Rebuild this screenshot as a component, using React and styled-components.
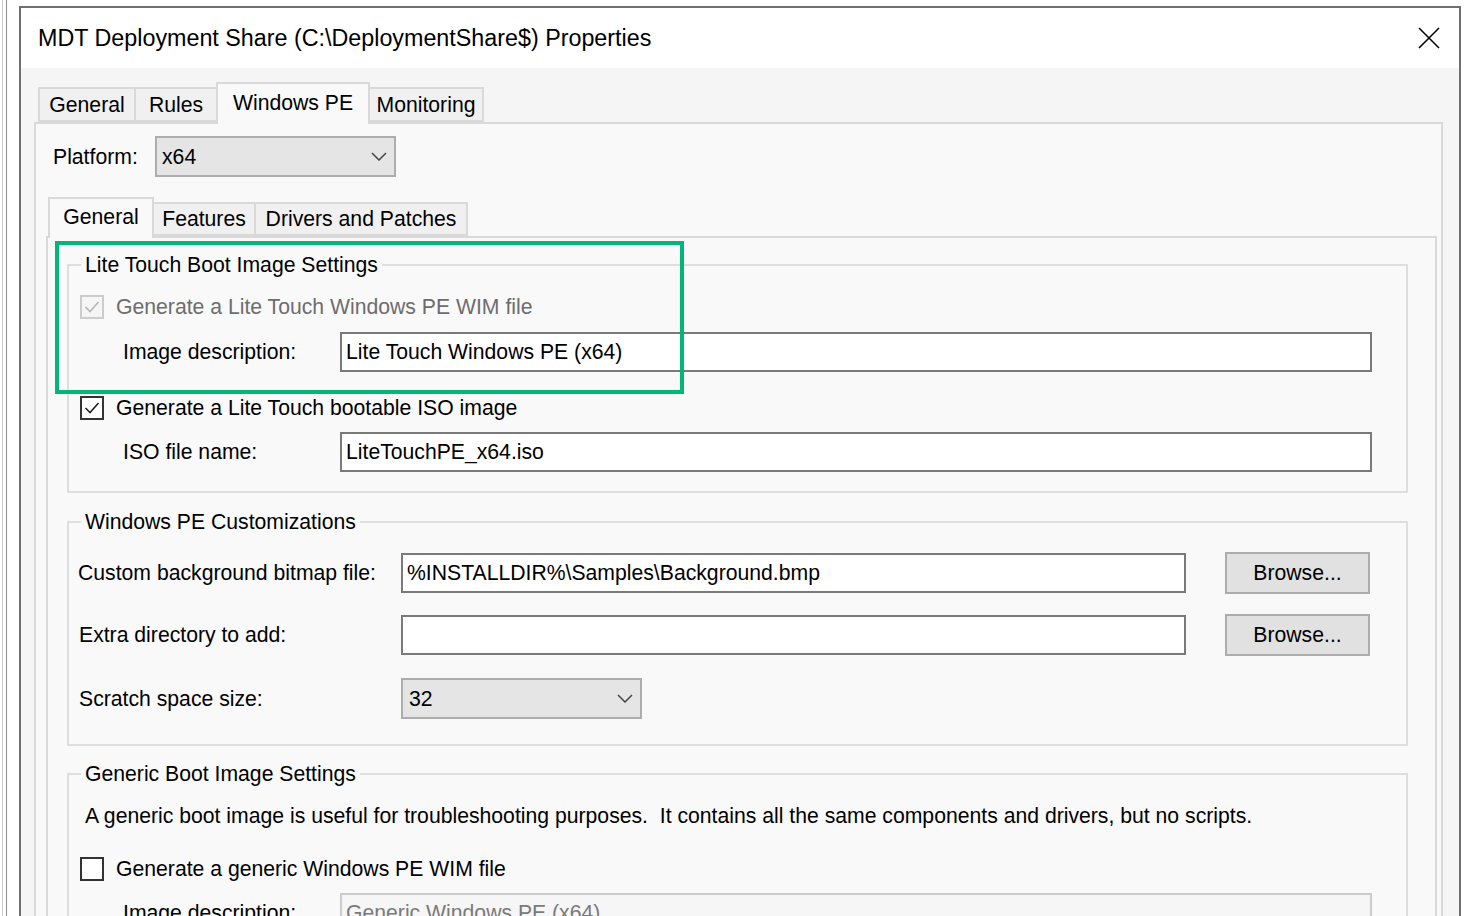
import React from 'react';
import styled, { createGlobalStyle } from 'styled-components';

const GlobalStyle = createGlobalStyle`
  html, body {
    margin: 0;
    padding: 0;
    background: #fff;
    overflow: hidden;
  }

  * {
    box-sizing: border-box;
  }
`;

const FONT = `"Liberation Sans", Arial, sans-serif`;
const TEXT_SIZE = '21.2px';

const Desktop = styled.div`
  display: flex;
  height: 916px;
  overflow: hidden;
  font-family: ${FONT};
  color: #000;
`;

const BackEdge = styled.div`
  flex: none;
  width: 19px;
  padding-left: 2px;
`;

const BackEdgeLine = styled.div`
  height: 100%;
  border-left: 1px solid #cacaca;
  padding-left: 3px;

  > div {
    height: 100%;
    border-left: 1px solid #8d8d8d;
  }
`;

const Dialog = styled.div`
  flex: none;
  width: 1442px;
  height: 1000px;
  margin-top: 6px;
  border: 2px solid #6f6f6f;
  border-bottom: none;
  display: flex;
  flex-direction: column;
`;

const TitleBar = styled.div`
  height: 60px;
  display: flex;
  align-items: center;
  justify-content: space-between;
  padding-left: 17px;
  background: #fff;
  font-size: 23.3px;
`;

const CloseBtn = styled.div`
  width: 60px;
  height: 60px;
  display: flex;
  align-items: center;
  justify-content: center;
`;

const Body = styled.div`
  flex: 1;
  background: #f5f5f5;
  padding: 14px 16px 0 13px;
  display: flex;
  flex-direction: column;
`;

const TabStrip = styled.div`
  display: flex;
  align-items: flex-end;
  margin-left: ${(p) => p.$ml}px;
  margin-top: ${(p) => p.$mt || 0}px;
`;

const Tab = styled.div`
  width: ${(p) => p.$w}px;
  height: ${(p) => (p.$active ? p.$h + 2 : p.$h - 5)}px;
  display: flex;
  align-items: center;
  justify-content: center;
  padding-bottom: ${(p) => (p.$active ? 3 : 0)}px;
  border: 2px solid #d9d9d9;
  border-bottom: ${(p) => (p.$active ? 'none' : '2px solid #d9d9d9')};
  margin-bottom: ${(p) => (p.$active ? -2 : 0)}px;
  background: ${(p) => (p.$active ? '#f9f9f9' : '#f0f0f0')};
  font-size: ${TEXT_SIZE};
  white-space: nowrap;
  position: relative;
  z-index: ${(p) => (p.$active ? 1 : 0)};

  & + & {
    margin-left: -2px;
  }
`;

const Panel = styled.div`
  flex: 1;
  border: 2px solid #d9d9d9;
  border-bottom: none;
  background: #f9f9f9;
  padding: ${(p) => p.$pad};
  display: flex;
  flex-direction: column;
  position: relative;
`;

const Row = styled.div`
  display: flex;
  align-items: center;
  height: ${(p) => p.$h || 40}px;
  margin-top: ${(p) => p.$mt || 0}px;
  padding-left: ${(p) => p.$pl || 0}px;
  flex: none;
`;

const Label = styled.div`
  width: ${(p) => (p.$w ? `${p.$w}px` : 'auto')};
  flex: none;
  font-size: ${TEXT_SIZE};
  white-space: pre;
  color: ${(p) => (p.$disabled ? '#6d6d6d' : '#000')};
`;

const Select = styled.div`
  width: 241px;
  height: 41px;
  flex: none;
  display: flex;
  align-items: center;
  justify-content: space-between;
  padding: 0 7px 0 ${(p) => p.$pl || 5}px;
  border: 2px solid #adadad;
  background: #e5e5e5;
  font-size: ${TEXT_SIZE};
`;

const TextBox = styled.input`
  width: ${(p) => p.$w}px;
  height: 40px;
  flex: none;
  margin: 0;
  padding: 0 4px;
  border: 2px solid ${(p) => (p.disabled ? '#cccccc' : '#7a7a7a')};
  border-radius: 0;
  background: ${(p) => (p.disabled ? '#f6f6f6' : '#fff')};
  color: ${(p) => (p.disabled ? '#7a7a7a' : '#000')};
  font-family: ${FONT};
  font-size: ${TEXT_SIZE};
  outline: none;
`;

const BrowseBtn = styled.button`
  width: 145px;
  height: 42px;
  flex: none;
  margin: 0 0 0 39px;
  padding: 0;
  border: 2px solid #adadad;
  border-radius: 0;
  background: #e1e1e1;
  color: #000;
  font-family: ${FONT};
  font-size: ${TEXT_SIZE};
`;

const Box = styled.span`
  width: 24px;
  height: 24px;
  flex: none;
  margin-right: 12px;
  display: flex;
  align-items: center;
  justify-content: center;
  border: 2px solid ${(p) => (p.$disabled ? '#cccccc' : '#333')};
  background: ${(p) => (p.$disabled ? '#f5f5f5' : '#fff')};
`;

const Group = styled.fieldset`
  margin: ${(p) => p.$mt}px 0 0;
  padding: 0 0 ${(p) => p.$pb}px;
  border: 2px solid #dcdfde;
  min-width: 0;
  flex: none;
`;

const Caption = styled.legend`
  margin-left: 12px;
  padding: 0 4px;
  font-size: ${TEXT_SIZE};
  line-height: 26px;
`;

const Note = styled.div`
  margin-top: ${(p) => p.$mt}px;
  padding-left: 16px;
  line-height: 24px;
  font-size: ${TEXT_SIZE};
  white-space: pre;
`;

const Highlight = styled.div`
  position: absolute;
  left: 7px;
  top: 3px;
  width: 629px;
  height: 153px;
  border: 4px solid #00b67a;
  pointer-events: none;
  z-index: 2;
`;

const Chevron = () => (
  <svg width="16" height="9" viewBox="0 0 16 9">
    <polyline points="1,1 8,8 15,1" fill="none" stroke="#444" strokeWidth="1.5" />
  </svg>
);

const CloseIcon = () => (
  <svg width="22" height="22" viewBox="0 0 22 22">
    <line x1="1" y1="1" x2="21" y2="21" stroke="#000" strokeWidth="1.6" />
    <line x1="21" y1="1" x2="1" y2="21" stroke="#000" strokeWidth="1.6" />
  </svg>
);

const CheckBox = ({ checked, disabled }) => (
  <Box $disabled={disabled}>
    {checked && (
      <svg width="18" height="18" viewBox="0 0 18 18">
        <polyline
          points="2.5,9 7,13.5 15.5,4"
          fill="none"
          stroke={disabled ? '#b5b5b5' : '#222'}
          strokeWidth="1.6"
        />
      </svg>
    )}
  </Box>
);

const outerTabs = [
  { name: 'General', w: 98 },
  { name: 'Rules', w: 84 },
  { name: 'Windows PE', w: 154, active: true },
  { name: 'Monitoring', w: 116 },
];

const innerTabs = [
  { name: 'General', w: 106, active: true },
  { name: 'Features', w: 104 },
  { name: 'Drivers and Patches', w: 214 },
];

const App = () => (
  <>
    <GlobalStyle />
    <Desktop>
      <BackEdge>
        <BackEdgeLine>
          <div />
        </BackEdgeLine>
      </BackEdge>
      <Dialog>
        <TitleBar>
          <span>MDT Deployment Share (C:\DeploymentShare$) Properties</span>
          <CloseBtn>
            <CloseIcon />
          </CloseBtn>
        </TitleBar>
        <Body>
          <TabStrip $ml={4}>
            {outerTabs.map((t) => (
              <Tab key={t.name} $w={t.w} $h={40} $active={t.active}>{t.name}</Tab>
            ))}
          </TabStrip>
          <Panel $pad="12px 4px 0 10px">
            <Row $h={41} $pl={7}>
              <Label $w={102}>Platform:</Label>
              <Select>
                <span>x64</span>
                <Chevron />
              </Select>
            </Row>
            <TabStrip $ml={2} $mt={20}>
              {innerTabs.map((t) => (
                <Tab key={t.name} $w={t.w} $h={39} $active={t.active}>{t.name}</Tab>
              ))}
            </TabStrip>
            <Panel $pad="0 27px 0 19px">
              <Highlight />
              <Group $mt={14} $pb={19}>
                <Caption>Lite Touch Boot Image Settings</Caption>
                <Row $mt={9} $pl={11}>
                  <CheckBox checked disabled />
                  <Label $disabled>Generate a Lite Touch Windows PE WIM file</Label>
                </Row>
                <Row $mt={5} $pl={54}>
                  <Label $w={217}>Image description:</Label>
                  <TextBox $w={1032} readOnly defaultValue="Lite Touch Windows PE (x64)" />
                </Row>
                <Row $mt={16} $pl={11}>
                  <CheckBox checked />
                  <Label>Generate a Lite Touch bootable ISO image</Label>
                </Row>
                <Row $mt={4} $pl={54}>
                  <Label $w={217}>ISO file name:</Label>
                  <TextBox $w={1032} readOnly defaultValue="LiteTouchPE_x64.iso" />
                </Row>
              </Group>

              <Group $mt={16} $pb={25}>
                <Caption>Windows PE Customizations</Caption>
                <Row $h={42} $mt={17} $pl={9}>
                  <Label $w={323}>Custom background bitmap file:</Label>
                  <TextBox $w={785} readOnly defaultValue="%INSTALLDIR%\Samples\Background.bmp" />
                  <BrowseBtn>Browse...</BrowseBtn>
                </Row>
                <Row $h={42} $mt={20} $pl={10}>
                  <Label $w={322}>Extra directory to add:</Label>
                  <TextBox $w={785} readOnly defaultValue="" />
                  <BrowseBtn>Browse...</BrowseBtn>
                </Row>
                <Row $h={41} $mt={22} $pl={10}>
                  <Label $w={322}>Scratch space size:</Label>
                  <Select $pl={6}>
                    <span>32</span>
                    <Chevron />
                  </Select>
                </Row>
              </Group>

              <Group $mt={15} $pb={20}>
                <Caption>Generic Boot Image Settings</Caption>
                <Note $mt={17}>
                  {'A generic boot image is useful for troubleshooting purposes.  It contains all the same components and drivers, but no scripts.'}
                </Note>
                <Row $mt={21} $pl={11}>
                  <CheckBox />
                  <Label>Generate a generic Windows PE WIM file</Label>
                </Row>
                <Row $mt={4} $pl={54}>
                  <Label $w={217}>Image description:</Label>
                  <TextBox $w={1032} disabled readOnly defaultValue="Generic Windows PE (x64)" />
                </Row>
              </Group>
            </Panel>
          </Panel>
        </Body>
      </Dialog>
    </Desktop>
  </>
);

export default App;
